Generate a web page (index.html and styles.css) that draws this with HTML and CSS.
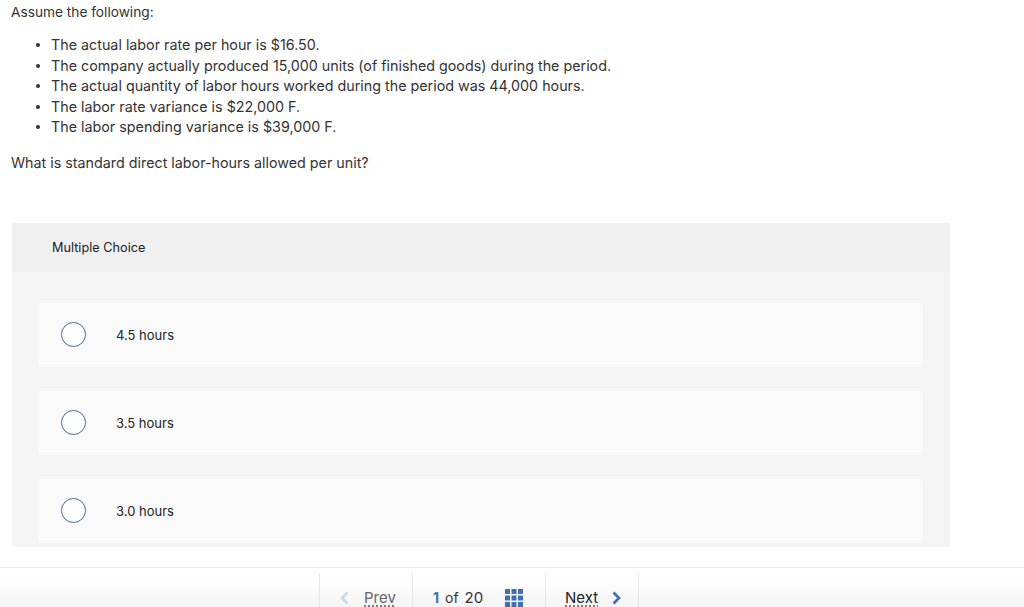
FILE: index.html
```html
<!DOCTYPE html>
<html lang="en">
<head>
<meta charset="utf-8">
<title>Multiple Choice</title>
<link rel="stylesheet" href="styles.css">
</head>
<body>
<main class="question">
  <p class="intro">Assume the following:</p>
  <ul class="facts">
    <li>The actual labor rate per hour is $16.50.</li>
    <li>The company actually produced 15,000 units (of finished goods) during the period.</li>
    <li>The actual quantity of labor hours worked during the period was 44,000 hours.</li>
    <li>The labor rate variance is $22,000 F.</li>
    <li>The labor spending variance is $39,000 F.</li>
  </ul>
  <p class="ask">What is standard direct labor-hours allowed per unit?</p>

  <section class="panel">
    <div class="panel-head">Multiple Choice</div>
    <div class="panel-body">
      <label class="option"><span class="radio"></span><span class="opt-text">4.5 hours</span></label>
      <label class="option"><span class="radio"></span><span class="opt-text">3.5 hours</span></label>
      <label class="option"><span class="radio"></span><span class="opt-text">3.0 hours</span></label>
    </div>
  </section>
</main>

<footer class="footer">
  <nav class="pager">
    <div class="seg seg-prev">
      <svg class="chev" width="9" height="14" viewBox="0 0 9 14"><path d="M7.5 1.5 L2 7 L7.5 12.5" fill="none" stroke="#c9d7ea" stroke-width="2.6"/></svg>
      <span class="link muted">Prev</span>
    </div>
    <div class="seg seg-mid">
      <span class="count"><b>1</b> of <span class="total">20</span></span>
      <svg class="grid" width="18" height="18" viewBox="0 0 18 18">
        <g fill="#3d6fb6">
          <rect x="0" y="0" width="5" height="5"/><rect x="6.5" y="0" width="5" height="5"/><rect x="13" y="0" width="5" height="5"/>
          <rect x="0" y="6.5" width="5" height="5"/><rect x="6.5" y="6.5" width="5" height="5"/><rect x="13" y="6.5" width="5" height="5"/>
          <rect x="0" y="13" width="5" height="5"/><rect x="6.5" y="13" width="5" height="5"/><rect x="13" y="13" width="5" height="5"/>
        </g>
      </svg>
    </div>
    <div class="seg seg-next">
      <span class="link">Next</span>
      <svg class="chev" width="9" height="14" viewBox="0 0 9 14"><path d="M1.5 1.5 L7 7 L1.5 12.5" fill="none" stroke="#3d6fb6" stroke-width="2.6"/></svg>
    </div>
  </nav>
</footer>
</body>
</html>
```

FILE: styles.css
```css
html, body {
  margin: 0;
  padding: 0;
  background: #fff;
}
body {
  font-family: "Inter", "Liberation Sans", sans-serif;
  color: #333;
  width: 1024px;
  height: 607px;
  overflow: hidden;
}
.question {
  padding: 2px 0 0 11px;
}
.intro, .ask {
  margin: 0;
  font-size: 14.3px;
  line-height: 20px;
}
.intro {
  font-size: 13.7px;
}
.facts {
  margin: 13px 0 0 0;
  padding: 0 0 0 40px;
  font-size: 14.3px;
  line-height: 20.5px;
  list-style: none;
}
.facts li::before {
  content: "";
  display: inline-block;
  width: 4px;
  height: 4px;
  border-radius: 50%;
  background: #333;
  margin-left: -15px;
  margin-right: 11px;
  vertical-align: 3px;
}
.ask {
  margin-top: 15px;
}
.panel {
  margin: 50px 0 0 1px;
  width: 938px;
  background: #f5f5f5;
}
.panel-head {
  height: 49px;
  background: #f0f0f0;
  padding-left: 40px;
  display: flex;
  align-items: center;
  font-size: 12.7px;
  color: #222;
}
.panel-body {
  padding: 31px 27px 4px 26px;
  display: flex;
  flex-direction: column;
  gap: 24px;
}
.option {
  height: 64px;
  background: #fafafa;
  border-radius: 4px;
  display: flex;
  align-items: center;
  padding-left: 23px;
}
.radio {
  width: 23px;
  height: 23px;
  border: 1.5px solid #3f6aa0;
  border-radius: 50%;
  background: #fff;
  flex: none;
}
.opt-text {
  margin-left: 30px;
  font-size: 13px;
  color: #222;
}
.footer {
  margin-top: 20px;
  border-top: 1px solid #ececec;
  height: 40px;
  background: linear-gradient(#fff 0%, #fff 30%, #f4f4f4 100%);
}
.pager {
  margin-left: 319px;
  display: flex;
  height: 100%;
  padding-top: 5px;
  box-sizing: border-box;
}
.seg {
  display: flex;
  align-items: center;
  padding-top: 10px;
  border-left: 1px solid #e6e6e6;
  font-size: 15px;
  height: 40px;
  box-sizing: border-box;
}
.seg-prev {
  width: 93px;
  padding-left: 20px;
}
.seg-prev .link {
  margin-left: 15px;
}
.seg-mid {
  width: 133px;
  padding-left: 20px;
}
.seg-next {
  width: 94px;
  padding-left: 19px;
  border-right: 1px solid #e6e6e6;
}
.seg-next .link {
  margin-right: 14px;
}
.link {
  color: #222;
  text-decoration: underline dotted #555;
  text-underline-offset: 3px;
}
.link.muted {
  color: #666;
}
.count {
  color: #333;
  font-size: 14px;
}
.count b {
  color: #3d6fb6;
  font-weight: 700;
  margin-right: 2px;
}
.total {
  font-size: 15px;
  margin-left: 2px;
}
.grid {
  margin-left: 22px;
}
```
